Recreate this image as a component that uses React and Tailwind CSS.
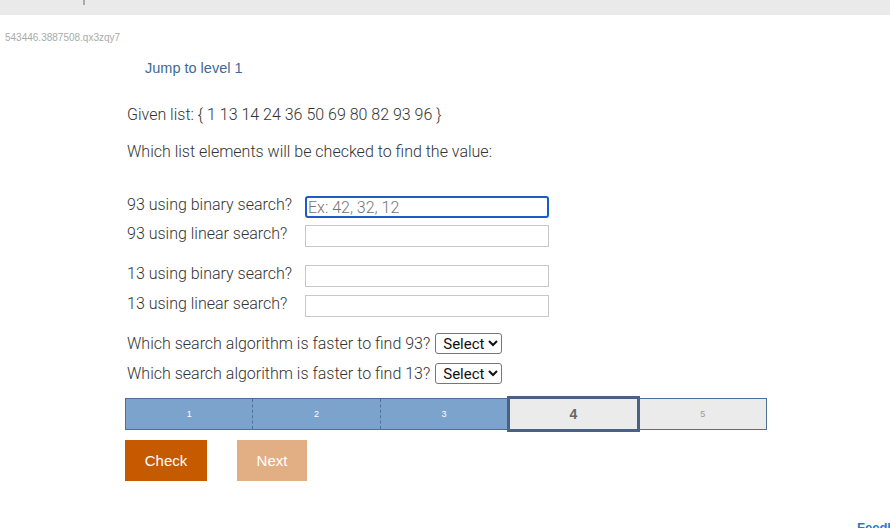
// Level 4 of the search-algorithm exercise

const ROWS = [
  { label: "93 using binary search?", focused: true, gap: "mt-[34px]" },
  { label: "93 using linear search?", gap: "mt-[7px]" },
  { label: "13 using binary search?", gap: "mt-[18px]" },
  { label: "13 using linear search?", gap: "mt-[8px]" },
];

const LEVELS = [1, 2, 3, 4, 5];
const CURRENT = 4;

function AnswerRow({ label, focused, gap }) {
  return (
    <div className={`flex items-start h-[22px] ${gap}`}>
      <label className="w-[180px] pl-[2px] shrink-0 leading-[18px]">{label}</label>
      <input
        type="text"
        placeholder={focused ? "Ex: 42, 32, 12" : ""}
        className={
          focused
            ? "w-[244px] h-[22px] px-[1px] border-2 border-[#1a5cc8] rounded-[3px] text-[16px] leading-[18px] placeholder:text-[#757575] outline-none"
            : "w-[244px] h-[22px] px-[2px] border border-[#c8c8c8] text-[16px] outline-none"
        }
      />
    </div>
  );
}

function Question({ value, gap }) {
  return (
    <div className={`flex items-center h-[21px] ${gap}`}>
      <span className="pl-[2px]">Which search algorithm is faster to find {value}?</span>
      <select className="ml-[5px] h-[21px] border border-[#767676] rounded-[3px] text-[15px] leading-[18px] font-normal text-[#111] bg-white pl-[3px]">
        <option>Select</option>
        <option>Binary</option>
        <option>Linear</option>
      </select>
    </div>
  );
}

function LevelBar() {
  return (
    <div className="mt-[14px] flex w-[642px] h-[32px] border border-[#4d6f99] font-['Liberation_Sans',Arial,sans-serif]">
      {LEVELS.map((n) => {
        if (n === CURRENT) {
          return (
            <div
              key={n}
              className="relative z-10 flex-1 -my-[3px] flex items-center justify-center border-[3px] border-[#4a6282] bg-[#ebebeb] text-[14px] font-bold text-[#666]"
            >
              {n}
            </div>
          );
        }
        const done = n < CURRENT;
        return (
          <div
            key={n}
            className={`flex-1 flex items-center justify-center text-[9px] ${
              done ? "bg-[#7ba3cb] text-white" : "bg-[#ebebeb] text-[#999]"
            } ${n < CURRENT - 1 ? "border-r border-dashed border-[#4d6f99]" : ""}`}
          >
            {n}
          </div>
        );
      })}
    </div>
  );
}

export default function App() {
  return (
    <div className="relative w-[890px] h-[528px] overflow-hidden bg-white font-['Roboto',sans-serif]">
      {/* Top strip */}
      <div className="relative h-[15px] bg-[#eaeaea]">
        <div className="absolute left-[83px] top-0 w-[2px] h-[5px] bg-[#aaa]" />
      </div>

      <div className="pl-[5px] pt-[17px] text-[10px] leading-[12px] text-[#aaa] font-['Liberation_Sans',Arial,sans-serif]">
        543446.3887508.qx3zqy7
      </div>

      <div className="pl-[125px] text-[16px] leading-[20px] font-light text-[#333]">
        <div className="ml-[20px] mt-[14px] text-[14.5px] text-[#3d6a98] font-normal font-['Liberation_Sans',Arial,sans-serif]">
          Jump to level 1
        </div>

        <p className="mt-[27px] pl-[2px]">Given list: {"{"} 1 13 14 24 36 50 69 80 82 93 96 {"}"}</p>
        <p className="mt-[17px] pl-[2px]">Which list elements will be checked to find the value:</p>

        {ROWS.map((r) => (
          <AnswerRow key={r.label} {...r} />
        ))}

        <Question value={93} gap="mt-[16px]" />
        <Question value={13} gap="mt-[9px]" />

        <LevelBar />

        <div className="mt-[10px] flex gap-[30px] font-['Liberation_Sans',Arial,sans-serif] font-normal">
          <button className="w-[82px] h-[41px] bg-[#c55a00] text-white text-[15px]">Check</button>
          <button className="w-[70px] h-[41px] bg-[#e2ae84] text-white text-[15px]">Next</button>
        </div>
      </div>

      {/* Feedback tab, mostly off screen */}
      <div className="absolute left-[857px] top-[518px] text-[13px] font-bold text-[#1f7ad6] font-['Liberation_Sans',Arial,sans-serif]">
        Feedback
      </div>
    </div>
  );
}
